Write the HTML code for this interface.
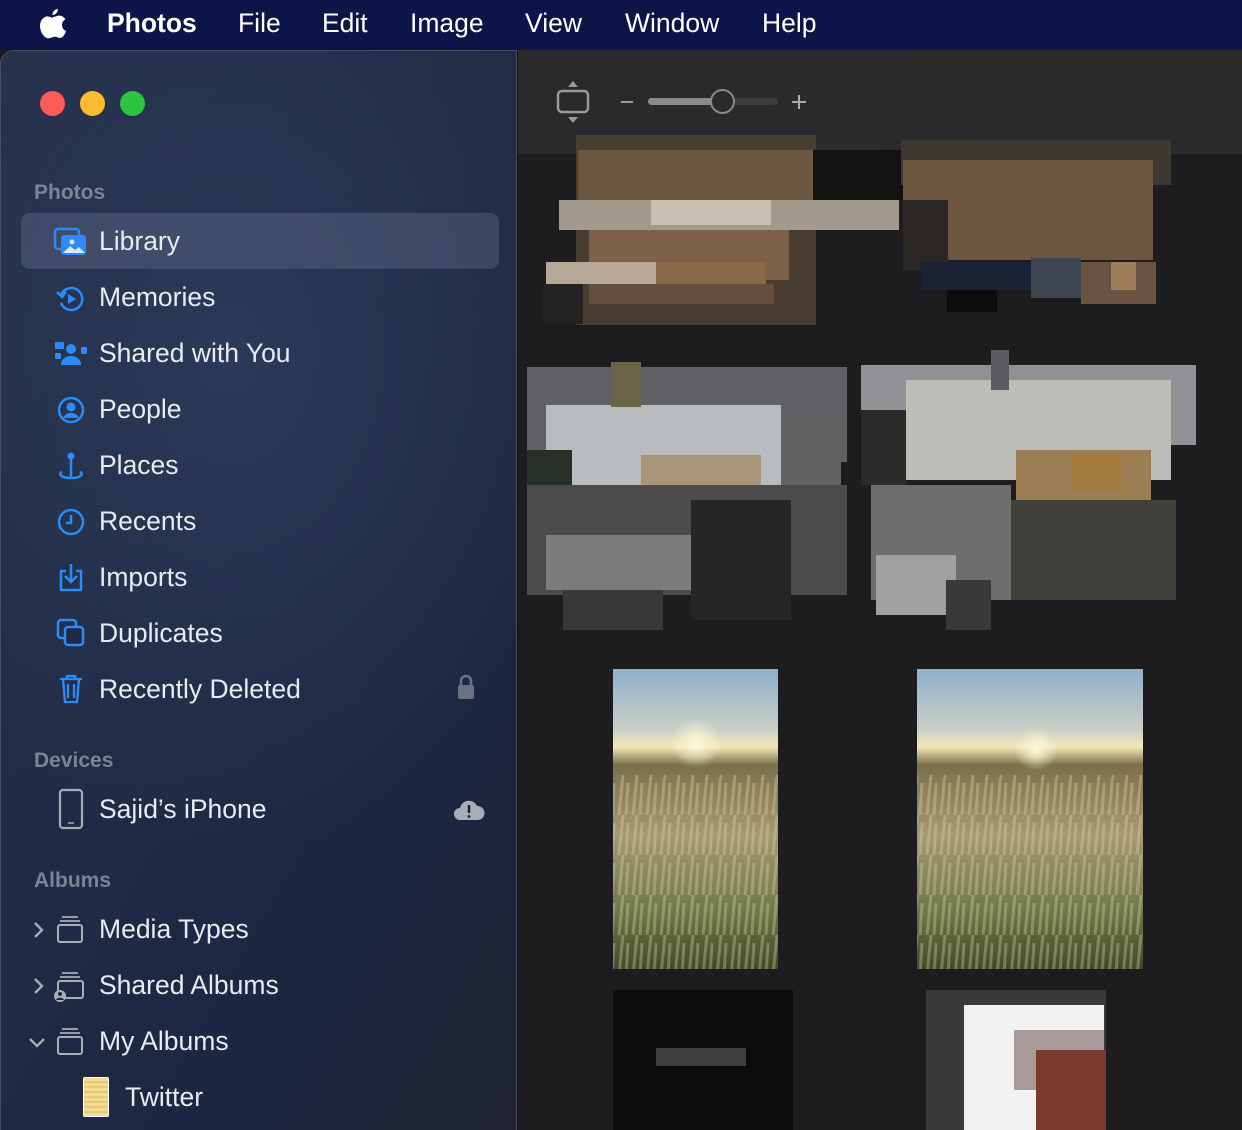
<!DOCTYPE html>
<html><head><meta charset="utf-8"><style>
*{margin:0;padding:0;box-sizing:border-box}
html,body{width:1242px;height:1130px;overflow:hidden}
body{background:#1b1b1d;font-family:"Liberation Sans",sans-serif;position:relative}
.menu{position:absolute;left:0;top:0;width:1242px;height:50px;background:#0d1448;color:#fff;font-size:26.5px}
.menu span{position:absolute;top:8px}
.side{position:absolute;left:0;top:50px;width:517px;height:1080px;overflow:hidden;border-radius:14px 0 0 0;border:1px solid #4a4e60;border-bottom:none;
background:radial-gradient(ellipse 380px 500px at 230px 300px,#2a3a58 0%,rgba(40,55,85,0) 100%),linear-gradient(120deg,#26304a 0%,#202a44 50%,#1c2640 75%,#222635 100%);}
.main{position:absolute;left:517px;top:50px;width:725px;height:1080px;overflow:hidden;background:#1d1d1f;border-left:1px solid #111}
.tb{position:absolute;left:0;top:0;width:725px;height:104px;background:linear-gradient(90deg,#2a2a2c,#2c2b2b)}
.dot{position:absolute;width:25px;height:25px;border-radius:50%}
.hdr{position:absolute;left:33px;color:#7c8394;font-size:21px;font-weight:bold}
.item{position:absolute;left:98px;color:#e8ebf2;font-size:26.5px;white-space:nowrap}
.ic{position:absolute}
.sel{position:absolute;left:20px;top:162px;width:478px;height:56px;border-radius:9px;background:rgba(110,120,150,.35)}
</style></head><body>
<div class="menu">
<svg style="position:absolute;left:38px;top:7px" width="30" height="34" viewBox="0 0 30 34"><path fill="#fff" d="M20 2c0 3-2.5 6-5.5 6C14.3 5 17 2 20 2zM15 10c2 0 4-1.4 6-1.4 3 0 5 1.6 6.4 3.6-5 2.8-4.2 10 .8 11.8-1 2.6-3.4 7-6.2 7-2 0-2.6-1.2-5-1.2s-3.2 1.2-5 1.2C7 33 2 25 2 19c0-6 4-9.6 7.6-9.6 2 0 3.6 1.4 5.4 1.4z"/></svg>
<span style="left:107px;font-weight:bold">Photos</span>
<span style="left:238px">File</span>
<span style="left:322px">Edit</span>
<span style="left:410px">Image</span>
<span style="left:525px">View</span>
<span style="left:625px">Window</span>
<span style="left:762px">Help</span>
</div>
<div class="side">
<div class="dot" style="left:39px;top:40px;background:#fc5b56"></div>
<div class="dot" style="left:79px;top:40px;background:#fdbb2f"></div>
<div class="dot" style="left:119px;top:40px;background:#2dc440"></div>
<div class="hdr" style="top:130px">Photos</div>
<div class="sel"></div>
<svg class="ic" style="left:52px;top:176px" width="36" height="30" viewBox="0 0 36 30"><rect x="2" y="2" width="24" height="20" rx="3" fill="none" stroke="#2b8cf9" stroke-width="2.5"/><rect x="8" y="8" width="25" height="20" rx="3" fill="#2b8cf9"/><circle cx="19" cy="15" r="2.5" fill="#dbe9ff"/><path d="M10 26l7-7 5 4 4-3 6 6z" fill="#dbe9ff"/></svg>
<div class="item" style="top:175px">Library</div>
<svg class="ic" style="left:54px;top:232px" width="32" height="32" viewBox="0 0 32 32"><path d="M6 12A11 11 0 1 1 6 20" fill="none" stroke="#2b8cf9" stroke-width="2.5"/><path d="M2 9l5 5 4-5" fill="none" stroke="#2b8cf9" stroke-width="2.5"/><path d="M13 11l8 5-8 5z" fill="#2b8cf9"/></svg>
<div class="item" style="top:231px">Memories</div>
<svg class="ic" style="left:52px;top:288px" width="36" height="30" viewBox="0 0 36 30"><rect x="2" y="3" width="9" height="7" rx="1" fill="#2b8cf9"/><rect x="2" y="14" width="6" height="6" rx="1" fill="#2b8cf9"/><rect x="28" y="8" width="6" height="7" rx="1" fill="#2b8cf9"/><circle cx="18" cy="10" r="5" fill="#2b8cf9"/><path d="M8 26c0-6 5-9 10-9s10 3 10 9z" fill="#2b8cf9"/></svg>
<div class="item" style="top:287px">Shared with You</div>
<svg class="ic" style="left:55px;top:344px" width="30" height="30" viewBox="0 0 30 30"><circle cx="15" cy="15" r="12" fill="none" stroke="#2b8cf9" stroke-width="2.5"/><circle cx="15" cy="12" r="4.5" fill="#2b8cf9"/><path d="M7 23c2-4 5-5 8-5s6 1 8 5" fill="#2b8cf9"/></svg>
<div class="item" style="top:343px">People</div>
<svg class="ic" style="left:55px;top:400px" width="30" height="32" viewBox="0 0 30 32"><circle cx="15" cy="5" r="3.5" fill="#2b8cf9"/><path d="M15 8v18M6 21c-4 2-1 6 9 6s13-4 9-6" fill="none" stroke="#2b8cf9" stroke-width="2.5"/></svg>
<div class="item" style="top:399px">Places</div>
<svg class="ic" style="left:55px;top:456px" width="30" height="30" viewBox="0 0 30 30"><circle cx="15" cy="15" r="12" fill="none" stroke="#2b8cf9" stroke-width="2.5"/><path d="M15 8v8h-5" fill="none" stroke="#2b8cf9" stroke-width="2.5"/></svg>
<div class="item" style="top:455px">Recents</div>
<svg class="ic" style="left:55px;top:510px" width="30" height="32" viewBox="0 0 30 32"><path d="M10 10H5v19h20V10h-5" fill="none" stroke="#2b8cf9" stroke-width="2.5"/><path d="M15 3v17M9 15l6 6 6-6" fill="none" stroke="#2b8cf9" stroke-width="2.5"/></svg>
<div class="item" style="top:511px">Imports</div>
<svg class="ic" style="left:55px;top:567px" width="30" height="30" viewBox="0 0 30 30"><rect x="2" y="2" width="18" height="18" rx="3" fill="none" stroke="#2b8cf9" stroke-width="2.5"/><rect x="9" y="9" width="18" height="18" rx="3" fill="#1f2942" stroke="#2b8cf9" stroke-width="2.5"/></svg>
<div class="item" style="top:567px">Duplicates</div>
<svg class="ic" style="left:57px;top:622px" width="26" height="32" viewBox="0 0 26 32"><path d="M2 6h22M9 6V3h8v3M5 6l2 23h12l2-23M10 11v14M16 11v14" fill="none" stroke="#2b8cf9" stroke-width="2.3"/></svg>
<div class="item" style="top:623px">Recently Deleted</div>
<svg class="ic" style="left:456px;top:623px" width="18" height="26" viewBox="0 0 18 26"><path d="M4 11V7a5 5 0 0 1 10 0v4" fill="none" stroke="#6c7182" stroke-width="2.5"/><rect x="1" y="11" width="16" height="14" rx="2" fill="#6c7182"/></svg>
<div class="hdr" style="top:698px">Devices</div>
<svg class="ic" style="left:57px;top:737px" width="26" height="42" viewBox="0 0 26 42"><rect x="2" y="2" width="22" height="38" rx="3" fill="none" stroke="#a8adb8" stroke-width="2.2"/><path d="M10 35h6" stroke="#a8adb8" stroke-width="1.5"/></svg>
<div class="item" style="top:743px">Sajid’s iPhone</div>
<svg class="ic" style="left:451px;top:747px" width="34" height="24" viewBox="0 0 34 24"><path d="M8 22a6 6 0 0 1 0-12 9 9 0 0 1 17-2 7 7 0 0 1 1 14z" fill="#a8adb8"/><path d="M17 7v8" stroke="#222" stroke-width="2.5"/><circle cx="17" cy="18.5" r="1.4" fill="#222"/></svg>
<div class="hdr" style="top:818px">Albums</div>
<svg class="ic" style="left:31px;top:870px" width="14" height="18" viewBox="0 0 14 18"><path d="M3 2l7 7-7 7" fill="none" stroke="#a8adb8" stroke-width="2.3"/></svg>
<svg class="ic" style="left:55px;top:863px" width="28" height="30" viewBox="0 0 28 30"><path d="M6 3h16M4 7h20" stroke="#a8adb8" stroke-width="1.8"/><rect x="2" y="11" width="24" height="17" rx="2" fill="none" stroke="#a8adb8" stroke-width="2"/></svg>
<div class="item" style="top:863px">Media Types</div>
<svg class="ic" style="left:31px;top:926px" width="14" height="18" viewBox="0 0 14 18"><path d="M3 2l7 7-7 7" fill="none" stroke="#a8adb8" stroke-width="2.3"/></svg>
<svg class="ic" style="left:51px;top:919px" width="34" height="34" viewBox="0 0 34 34"><path d="M10 3h16M8 7h20" stroke="#a8adb8" stroke-width="1.8"/><rect x="6" y="11" width="25" height="17" rx="2" fill="none" stroke="#a8adb8" stroke-width="2"/><circle cx="8" cy="26" r="6" fill="#a8adb8"/><circle cx="8" cy="24" r="2" fill="#222a40"/><path d="M4 30c1-3 7-3 8 0" fill="#222a40"/></svg>
<div class="item" style="top:919px">Shared Albums</div>
<svg class="ic" style="left:27px;top:985px" width="20" height="14" viewBox="0 0 20 14"><path d="M2 3l7 7 7-7" fill="none" stroke="#a8adb8" stroke-width="2.3"/></svg>
<svg class="ic" style="left:55px;top:975px" width="28" height="30" viewBox="0 0 28 30"><path d="M6 3h16M4 7h20" stroke="#a8adb8" stroke-width="1.8"/><rect x="2" y="11" width="24" height="17" rx="2" fill="none" stroke="#a8adb8" stroke-width="2"/></svg>
<div class="item" style="top:975px">My Albums</div>
<div class="ic" style="left:82px;top:1026px;width:26px;height:40px;border-radius:2px;background:repeating-linear-gradient(0deg,#f2dc96 0 3px,#e8c874 3px 5px);border:1px solid #fff"></div>
<div class="item" style="top:1031px;left:124px">Twitter</div>
</div>
<div class="main">
<div class="tb"></div>
<svg style="position:absolute;left:38px;top:30px" width="34" height="44" viewBox="0 0 34 44"><path d="M17 1l-5 6h10z M17 43l-5-6h10z" fill="#9a9a9c"/><rect x="2" y="11" width="30" height="21" rx="4" fill="none" stroke="#9a9a9c" stroke-width="2.5"/></svg>
<div style="position:absolute;left:103px;top:51px;width:12px;height:2px;background:#999"></div>
<div style="position:absolute;left:130px;top:48px;width:130px;height:7px;border-radius:4px;background:#3d3d3f"></div>
<div style="position:absolute;left:130px;top:48px;width:70px;height:7px;border-radius:4px;background:#8a8a8c"></div>
<div style="position:absolute;left:192px;top:39px;width:25px;height:25px;border-radius:50%;border:2px solid #8a8a8c;background:#2b2b2d"></div>
<div style="position:absolute;left:274px;top:51px;width:14px;height:2px;background:#aaa"></div>
<div style="position:absolute;left:280px;top:45px;width:2px;height:14px;background:#aaa"></div>
<svg style="position:absolute;left:0;top:85px" width="725" height="995">
<defs>
<linearGradient id="ph" x1="0" y1="0" x2="0" y2="1">
<stop offset="0" stop-color="#8fb0cc"/><stop offset=".2" stop-color="#c9cfc7"/><stop offset=".26" stop-color="#f2e7b8"/><stop offset=".32" stop-color="#7c6f4c"/><stop offset=".55" stop-color="#a79a72"/><stop offset=".8" stop-color="#6f7a4a"/><stop offset="1" stop-color="#3f4a2c"/>
</linearGradient>
<radialGradient id="sun"><stop offset="0" stop-color="#fff8d8"/><stop offset="1" stop-color="#fff8d8" stop-opacity="0"/></radialGradient>
<pattern id="gr" width="14" height="40" patternUnits="userSpaceOnUse"><path d="M3 40L7 0M10 40L12 8" stroke="#e0d2a6" stroke-opacity=".35" stroke-width="3"/></pattern>
</defs>
<g transform="translate(-517,-135)">
<rect x="575" y="135" width="240" height="190" fill="#4a3e33"/>
<rect x="577" y="150" width="236" height="55" fill="#6b5640"/>
<rect x="558" y="200" width="340" height="30" fill="#a3998d"/>
<rect x="650" y="200" width="120" height="25" fill="#c9bfb2"/>
<rect x="588" y="230" width="200" height="50" fill="#7d6249"/>
<rect x="545" y="262" width="110" height="22" fill="#b8a898"/>
<rect x="655" y="262" width="110" height="22" fill="#8b6a49"/>
<rect x="588" y="284" width="185" height="20" fill="#664f3e"/>
<rect x="542" y="284" width="40" height="40" fill="#242222"/>
<rect x="812" y="150" width="90" height="50" fill="#121212"/>
<rect x="900" y="140" width="270" height="45" fill="#3f3933"/>
<rect x="902" y="160" width="250" height="100" fill="#6c5640"/>
<rect x="902" y="200" width="45" height="70" fill="#2a2725"/>
<rect x="920" y="262" width="110" height="28" fill="#1a2236"/>
<rect x="1030" y="258" width="50" height="40" fill="#3e4450"/>
<rect x="1080" y="262" width="75" height="42" fill="#6a5441"/>
<rect x="1110" y="262" width="25" height="28" fill="#9d7c5a"/>
<rect x="946" y="290" width="50" height="22" fill="#0c0c0e"/>
<rect x="526" y="367" width="320" height="95" fill="#5f6165"/>
<rect x="545" y="405" width="235" height="80" fill="#b9bcbe"/>
<rect x="610" y="362" width="30" height="45" fill="#6c6448"/>
<rect x="526" y="450" width="45" height="35" fill="#263026"/>
<rect x="640" y="455" width="120" height="30" fill="#a89478"/>
<rect x="780" y="420" width="60" height="80" fill="#626262"/>
<rect x="526" y="485" width="320" height="110" fill="#4a4b4a"/>
<rect x="545" y="535" width="150" height="55" fill="#7c7c7e"/>
<rect x="690" y="500" width="100" height="120" fill="#262626"/>
<rect x="562" y="590" width="100" height="40" fill="#38383a"/>
<rect x="860" y="365" width="335" height="80" fill="#909194"/>
<rect x="905" y="380" width="265" height="100" fill="#bdbcb6"/>
<rect x="860" y="410" width="45" height="75" fill="#2c2b2a"/>
<rect x="990" y="350" width="18" height="40" fill="#5c5d60"/>
<rect x="1015" y="450" width="135" height="55" fill="#9c7e55"/>
<rect x="1070" y="455" width="50" height="35" fill="#a37a3c"/>
<rect x="870" y="485" width="140" height="115" fill="#6d6d6b"/>
<rect x="1010" y="500" width="165" height="100" fill="#3f413b"/>
<rect x="875" y="555" width="80" height="60" fill="#a0a0a0"/>
<rect x="945" y="580" width="45" height="50" fill="#3a3a3c"/>
<rect x="612" y="990" width="180" height="140" fill="#0c0c0c"/>
<rect x="655" y="1048" width="90" height="18" fill="#3f3f3f"/>
<rect x="925" y="990" width="180" height="140" fill="#3a3a3a"/>
<rect x="963" y="1005" width="140" height="125" fill="#f2f2f2"/>
<rect x="1013" y="1030" width="90" height="60" fill="#a99"/>
<rect x="1035" y="1050" width="70" height="80" fill="#7a3a2e"/>
</g>
<rect x="95" y="534" width="165" height="300" fill="url(#ph)"/>
<rect x="95" y="640" width="165" height="194" fill="url(#gr)"/>
<circle cx="178" cy="608" r="25" fill="url(#sun)"/>
<rect x="399" y="534" width="226" height="300" fill="url(#ph)"/>
<rect x="399" y="640" width="226" height="194" fill="url(#gr)"/>
<circle cx="518" cy="614" r="22" fill="url(#sun)"/>
</svg>
</div>
</body></html>
